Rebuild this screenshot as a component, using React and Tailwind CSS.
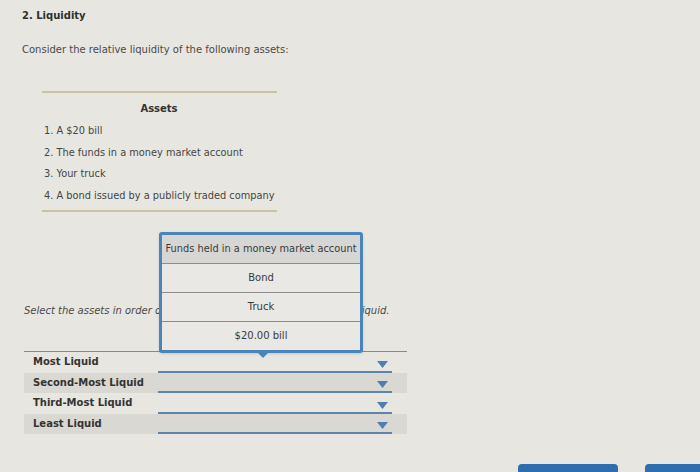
import React from 'react';

const assets = [
  'A $20 bill',
  'The funds in a money market account',
  'Your truck',
  'A bond issued by a publicly traded company',
];

const rows = ['Most Liquid', 'Second-Most Liquid', 'Third-Most Liquid', 'Least Liquid'];

const options = ['Bond', 'Truck', '$20.00 bill'];

function Caret() {
  return (
    <svg width="11" height="7" viewBox="0 0 11 7" className="shrink-0">
      <path d="M0 0 H11 L5.5 7 Z" fill="#4f7fae" />
    </svg>
  );
}

export default function App() {
  return (
    <div
      className="relative h-[472px] w-[700px] overflow-hidden bg-[#e8e6e0] text-[#3a3a3a]"
      style={{ fontFamily: '"DejaVu Sans", Verdana, sans-serif' }}
    >
      <div className="pl-[22px] pt-[9px]">
        <h2 className="text-[10px] font-bold leading-[14px] text-[#2f2f2f]">2. Liquidity</h2>
        <p className="mt-[20px] text-[10px] leading-[14px] text-[#4a4a4a]">
          Consider the relative liquidity of the following assets:
        </p>
      </div>

      <div className="ml-[42px] mt-[34px] w-[235px] border-y-2 border-[#c9c2a4] pb-[4px]">
        <div className="pt-[9px] text-center text-[10px] font-bold leading-[14px] text-[#333]">
          <span className="ml-[-1px]">Assets</span>
        </div>
        <ol className="mt-[4px] pl-[2px] text-[9.8px] leading-[21.6px] text-[#454545]">
          {assets.map((a, i) => (
            <li key={a} className="whitespace-nowrap">
              {i + 1}. {a}
            </li>
          ))}
        </ol>
      </div>

      <p className="ml-[24px] mt-[92px] whitespace-nowrap text-[10px] italic leading-[14px] text-[#4a4a4a]">
        Select the assets in order of liquidity, from most liquid to the least liquid.
      </p>

      <div className="ml-[24px] mt-[33px] w-[383px] border-t border-[#8a8a8a]">
        {rows.map((r, i) => (
          <div
            key={r}
            className={`flex h-[20.5px] items-stretch ${i % 2 === 1 ? 'bg-[#dad8d2]' : ''}`}
          >
            <div className="w-[134px] pl-[9px] pt-[4px] text-[10px] font-bold leading-[12px] text-[#333]">
              {r}
            </div>
            <div className="flex w-[234px] items-end justify-end border-b-2 border-[#5e84aa] pb-[3px] pr-[4px]">
              <Caret />
            </div>
          </div>
        ))}
      </div>

      <div className="mt-[30px] flex justify-end gap-[27px]">
        <div className="h-[12px] w-[100px] rounded-t-[4px] bg-[#2c6eb0]" />
        <div className="h-[12px] w-[55px] rounded-tl-[4px] bg-[#2c6eb0]" />
      </div>

      <div className="absolute left-[159px] top-[232px] w-[204px] rounded-[3px] border-[3px] border-[#4a85ba] bg-[#e9e8e4] shadow-sm">
        <div className="flex h-[28px] items-center justify-center whitespace-nowrap bg-[#d6d6d4] text-[9.8px] leading-[12px] text-[#3a3a3a]">
          Funds held in a money market account
        </div>
        {options.map((o) => (
          <div
            key={o}
            className="flex h-[29px] items-center justify-center border-t border-[#8c8c8c] text-[10px] leading-[12px] text-[#3a3a3a]"
          >
            {o}
          </div>
        ))}
        <div className="absolute bottom-[-8px] left-[96px] h-0 w-0 border-x-[5px] border-t-[5px] border-x-transparent border-t-[#4a85ba]" />
      </div>
    </div>
  );
}
